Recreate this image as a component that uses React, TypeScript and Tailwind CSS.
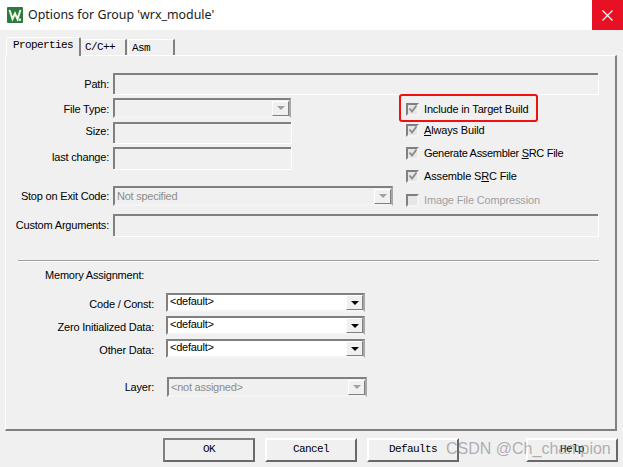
const sans = "font-['Liberation_Sans',Arial,sans-serif]";
const mono = "font-['Liberation_Mono','Courier_New',monospace]";

function Field({ w, h }: { w: string; h: string }) {
  return <div className={`${w} ${h} box-border border-2 border-t-[#808080] border-l-[#808080] border-r-0 border-b-0 shadow-[1px_1px_0_#ffffff]`} />;
}

function Arrow({ disabled }: { disabled?: boolean }) {
  return (
    <div className="w-[17px] h-[15px] ml-auto box-border flex items-center justify-center bg-[#f0f0f0] border border-t-white border-l-white border-r-[#808080] border-b-[#808080]">
      <div className={`w-0 h-0 border-x-[4px] border-x-transparent border-t-[4px] ${disabled ? "border-t-[#a0a0a0]" : "border-t-black"}`} />
    </div>
  );
}

function Combo({ w, h, text, disabled, textClass = "" }: { w: string; h: string; text?: string; disabled?: boolean; textClass?: string }) {
  return (
    <div className={`${w} ${h} box-border flex items-center border-2 border-t-[#808080] border-l-[#808080] border-r-[#a8a8a8] border-b-[#f4f4f4] ${disabled ? "bg-[#f0f0f0] text-[#8c8c8c]" : "bg-white text-black"} text-[11px] leading-none tracking-[-0.25px]`}>
      <span className={`flex-1 pl-[2px] ${textClass}`}>{text}</span>
      <Arrow disabled={disabled} />
    </div>
  );
}

function Row({ label, labelW = "w-[103px]", gap = "ml-[4px]", labelPad = "", children, mt }: { label: string; labelW?: string; gap?: string; labelPad?: string; children: React.ReactNode; mt: string }) {
  return (
    <div className={`flex items-center ${mt}`}>
      <div className={`${labelW} ${labelPad} text-right text-[11px] leading-none text-black tracking-[-0.2px]`}>{label}</div>
      <div className={gap}>{children}</div>
    </div>
  );
}

function Check({ label, disabled, checked = true, mt, tracking = "tracking-[-0.15px]" }: { label: React.ReactNode; disabled?: boolean; checked?: boolean; mt: string; tracking?: string }) {
  return (
    <div className={`flex items-center ${mt} h-[14px]`}>
      <div className="w-[13px] h-[13px] box-border border-2 border-t-[#808080] border-l-[#808080] border-r-[#f4f4f4] border-b-[#f4f4f4] bg-[#e6e6e6] flex items-center justify-center">
        {checked && (
          <svg viewBox="0 0 10 10" className="w-[10px] h-[10px] shrink-0"><path d="M1.5 4.5 L4 7.5 L8.5 1.5" fill="none" stroke="#8a8a8a" strokeWidth="1.8" /></svg>
        )}
      </div>
      <span className={`ml-[5px] text-[11px] leading-none ${tracking} ${disabled ? "text-[#a0a0a0]" : "text-black"}`}>{label}</span>
    </div>
  );
}

function Btn({ children, ml, className = "border-t-white border-l-white border-r-[#696969] border-b-[#696969]" }: { children: string; ml?: string; className?: string }) {
  return (
    <div className={`${ml ?? ""} w-[92px] h-[24px] box-border flex items-center justify-center pb-[2px] border-2 ${className} ${mono} text-[11px] tracking-[-0.6px] text-black`}>
      {children}
    </div>
  );
}

export default function App() {
  return (
    <div className={`relative w-[623px] h-[467px] overflow-hidden bg-[#f0f0f0] ${sans}`}>
      {/* Title bar */}
      <div className="h-[30px] bg-white flex items-center">
        <svg viewBox="0 0 16 16" className="w-[16px] h-[16px] ml-[7px]">
          <rect x="0" y="0" width="16" height="16" rx="1" fill="#2c7a3c" />
          <path d="M2.5 3 L5.5 12 L8 6.5 L10.5 12 L13.5 3" fill="none" stroke="#eef5ea" strokeWidth="2" />
          <rect x="11.5" y="11.5" width="2.5" height="2.5" fill="#dbe9d6" />
        </svg>
        <span className="ml-[5px] text-[12.4px] leading-none text-[#1a1a1a] font-['Noto_Sans',sans-serif]">Options for Group 'wrx_module'</span>
        <div className="ml-auto w-[31px] h-[30px] bg-[#e81123] flex items-center justify-center">
          <svg viewBox="0 0 11 11" className="w-[11px] h-[11px]"><path d="M0.5 0.5 L10.5 10.5 M10.5 0.5 L0.5 10.5" stroke="#fff" strokeWidth="1.1" /></svg>
        </div>
      </div>

      {/* Tabs */}
      <div className={`flex items-end h-[25px] pl-[6px] ${mono} text-[11px] leading-[13px] tracking-[-0.6px] text-black`}>
        <div className="relative z-10 w-[75px] h-[19px] box-border pl-[6px] pt-[1px] bg-[#f0f0f0] border-t border-l border-t-white border-l-white border-r-2 border-r-[#808080] rounded-t-[2px] -mb-[1px]">Properties</div>
        <div className="w-[46px] h-[16px] box-border pl-[4px] pt-[1px] border-t border-t-white border-r-2 border-r-[#808080]">C/C++</div>
        <div className="ml-[1px] w-[47px] h-[16px] box-border pl-[3px] pt-[2px] border-t border-l border-t-white border-l-white border-r-2 border-r-[#808080]">Asm</div>
      </div>

      {/* Panel */}
      <div className="relative ml-[5px] w-[612px] h-[376px] box-border border-t border-l border-t-white border-l-white border-r-2 border-b-2 border-r-[#808080] border-b-[#808080] pt-[17px]">
        <Row label="Path:" labelPad="pt-[2px]" mt="mt-0"><Field w="w-[485px]" h="h-[21px]" /></Row>

        <div className="flex mt-[4px]">
          <div className="w-[387px]">
            <Row label="File Type:" labelPad="pt-[2px]" mt="mt-0">
              <Combo w="w-[178px]" h="h-[20px]" disabled />
            </Row>
            <Row label="Size:" labelPad="-mt-[2px]" mt="mt-[4px]"><Field w="w-[178px]" h="h-[21px]" /></Row>
            <Row label="last change:" labelPad="-mt-[2px]" mt="mt-[4px]"><Field w="w-[178px]" h="h-[22px]" /></Row>
            <Row label="Stop on Exit Code:" mt="mt-[17px]">
              <Combo w="w-[280px]" h="h-[20px]" text="Not specified" disabled />
            </Row>
          </div>
          <div className="pl-[13px] pt-[3px]">
            <Check label="Include in Target Build" mt="mt-[1px]" />
            <Check label={<><u>A</u>lways Build</>} mt="mt-[7px]" />
            <Check label={<>Generate Assembler <u>S</u>RC File</>} tracking="tracking-[-0.3px]" mt="mt-[9px]" />
            <Check label={<>Assemble S<u>R</u>C File</>} mt="mt-[9px]" />
            <Check label="Image File Compression" disabled checked={false} mt="mt-[10px]" />
          </div>
        </div>

        <Row label="Custom Arguments:" mt="mt-[7px]"><Field w="w-[485px]" h="h-[22px]" /></Row>

        {/* Divider */}
        <div className="ml-[12px] w-[581px] h-[2px] mt-[24px] bg-[#a0a0a0] border-b border-b-white" />

        <div className="ml-[39px] mt-[7px] h-[12px] text-[11px] leading-[12px] tracking-[-0.2px] text-black">Memory Assignment:</div>

        <div className="mt-[12px]">
          <Row label="Code / Const:" labelW="w-[148px]" gap="ml-[12px]" labelPad="pt-[4px]" mt="mt-0">
            <Combo w="w-[199px]" h="h-[19px]" text="<default>" textClass="-mt-[2px]" />
          </Row>
          <Row label="Zero Initialized Data:" labelW="w-[148px]" gap="ml-[12px]" labelPad="pt-[4px]" mt="mt-[4px]">
            <Combo w="w-[199px]" h="h-[19px]" text="<default>" textClass="-mt-[2px]" />
          </Row>
          <Row label="Other Data:" labelW="w-[148px]" gap="ml-[12px]" labelPad="pt-[4px]" mt="mt-[4px]">
            <Combo w="w-[199px]" h="h-[19px]" text="<default>" textClass="-mt-[2px]" />
          </Row>
          <Row label="Layer:" labelW="w-[148px]" gap="ml-[13px]" mt="mt-[19px]">
            <Combo w="w-[200px]" h="h-[20px]" text="<not assigned>" disabled />
          </Row>
        </div>

        {/* Red annotation */}
        <div className="absolute left-[393px] top-[38px] w-[139px] h-[28px] border-2 border-[#f01010] rounded-[3px]" />
      </div>

      {/* Buttons */}
      <div className="flex mt-[7px] pl-[163px]">
        <Btn className="border-t-[#808080] border-l-[#808080] border-r-[#696969] border-b-[#696969]">OK</Btn>
        <Btn ml="ml-[10px]">Cancel</Btn>
        <Btn ml="ml-[10px]">Defaults</Btn>
        <Btn ml="ml-[67px]">Help</Btn>
      </div>

      {/* Watermark */}
      <div className="absolute left-[446px] top-[440px] text-[16px] leading-[18px] text-[#80808099] whitespace-nowrap">CSDN @Ch_champion</div>
    </div>
  );
}
